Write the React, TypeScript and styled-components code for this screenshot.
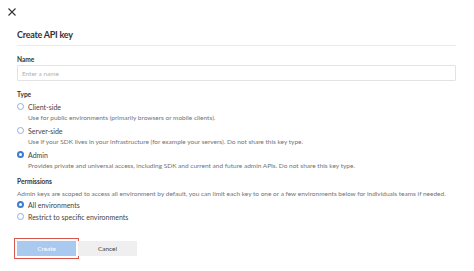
import React, { useState } from "react";
import styled, { createGlobalStyle } from "styled-components";

const GlobalStyle = createGlobalStyle`
  html, body {
    margin: 0;
    padding: 0;
    background: #ffffff;
  }
  body {
    font-family: Lato, "Open Sans", "Liberation Sans", sans-serif;
    color: #333;
  }
`;

type Option = { id: string; label: string; description?: string };

const typeOptions: Option[] = [
  {
    id: "client",
    label: "Client-side",
    description: "Use for public environments (primarily browsers or mobile clients).",
  },
  {
    id: "server",
    label: "Server-side",
    description:
      "Use if your SDK lives in your infrastructure (for example your servers). Do not share this key type.",
  },
  {
    id: "admin",
    label: "Admin",
    description:
      "Provides private and universal access, including SDK and current and future admin APIs. Do not share this key type.",
  },
];

const permissionOptions: Option[] = [
  { id: "all", label: "All environments" },
  { id: "restrict", label: "Restrict to specific environments" },
];

const App: React.FC = () => {
  const [keyType, setKeyType] = useState("admin");
  const [scope, setScope] = useState("all");
  const [name, setName] = useState("");

  return (
    <>
      <GlobalStyle />
      <Page>
        <CloseIcon aria-label="Close">
          <svg width="10" height="10" viewBox="0 0 10 10">
            <path d="M1.5 1.5 L8.5 8.5 M8.5 1.5 L1.5 8.5" stroke="#333" strokeWidth="1.1" fill="none" />
          </svg>
        </CloseIcon>
        <Content>
          <Title>Create API key</Title>
          <Divider />
          <Field>
            <Label>Name</Label>
            <NameInput
              placeholder="Enter a name"
              value={name}
              onChange={(e) => setName(e.target.value)}
            />
          </Field>
          <Field>
            <Label>Type</Label>
            <OptionList>
              {typeOptions.map((o) => (
                <RadioOption
                  key={o.id}
                  option={o}
                  checked={keyType === o.id}
                  onSelect={() => setKeyType(o.id)}
                />
              ))}
            </OptionList>
          </Field>
          <Field $gap={7}>
            <Label>Permissions</Label>
            <Help>
              Admin keys are scoped to access all environment by default, you can limit each key to
              one or a few environments below for individuals teams if needed.
            </Help>
            <OptionList $tight>
              {permissionOptions.map((o) => (
                <RadioOption
                  key={o.id}
                  option={o}
                  checked={scope === o.id}
                  onSelect={() => setScope(o.id)}
                />
              ))}
            </OptionList>
          </Field>
          <Actions>
            <CreateButton disabled>Create</CreateButton>
            <CancelButton>Cancel</CancelButton>
          </Actions>
        </Content>
      </Page>
    </>
  );
};

const RadioOption: React.FC<{ option: Option; checked: boolean; onSelect: () => void }> = ({
  option,
  checked,
  onSelect,
}) => (
  <OptionItem>
    <OptionRow onClick={onSelect}>
      <RadioDot $checked={checked} />
      <OptionLabel>{option.label}</OptionLabel>
    </OptionRow>
    {option.description && <OptionDesc>{option.description}</OptionDesc>}
  </OptionItem>
);

export default App;

const Page = styled.div`
  width: 474px;
  height: 271px;
  box-sizing: border-box;
  padding: 7px 0 0 7px;
  overflow: hidden;
`;

const CloseIcon = styled.div`
  width: 10px;
  height: 10px;
  display: flex;
`;

const Content = styled.div`
  display: flex;
  flex-direction: column;
  padding: 0 18px 0 10px;
`;

const Title = styled.h1`
  margin: 12px 0 0;
  font-size: 9px;
  line-height: 12px;
  font-weight: 700;
  letter-spacing: -0.25px;
  color: #333;
`;

const Divider = styled.div`
  height: 1px;
  background: #ececec;
  margin-top: 4px;
`;

const Field = styled.div<{ $gap?: number }>`
  display: flex;
  flex-direction: column;
  margin-top: ${({ $gap }) => $gap ?? 9}px;
`;

const Label = styled.div`
  font-size: 6.6px;
  font-weight: 700;
  line-height: 9px;
  color: #333;
`;

const NameInput = styled.input`
  margin-top: 1px;
  height: 16px;
  box-sizing: border-box;
  border: 1px solid #e3e3e3;
  border-radius: 1px;
  padding: 0 4px;
  font-family: inherit;
  font-size: 6.4px;
  color: #333;
  outline: none;
  &::placeholder {
    color: #b0b0b0;
  }
`;

const Help = styled.div`
  font-size: 6.5px;
  line-height: 9px;
  color: #737373;
  margin-top: 3px;
`;

const OptionList = styled.div<{ $tight?: boolean }>`
  display: flex;
  flex-direction: column;
  gap: ${({ $tight }) => ($tight ? "3px" : "4px")};
  margin-top: ${({ $tight }) => ($tight ? "2px" : "3px")};
`;

const OptionItem = styled.div`
  display: flex;
  flex-direction: column;
`;

const OptionRow = styled.label`
  display: flex;
  align-items: center;
  gap: 4px;
  height: 9px;
  cursor: pointer;
`;

const RadioDot = styled.span<{ $checked: boolean }>`
  width: 7px;
  height: 7px;
  box-sizing: border-box;
  border-radius: 50%;
  border: ${({ $checked }) => ($checked ? "2px solid #3f7ccf" : "1px solid #8fb1dd")};
  background: #fff;
`;

const OptionLabel = styled.span`
  font-size: 7px;
  color: #444;
`;

const OptionDesc = styled.div`
  font-size: 6.5px;
  line-height: 9px;
  color: #737373;
  margin-top: 2px;
  padding-left: 11px;
`;

const Actions = styled.div`
  display: flex;
  gap: 2px;
  margin-top: 20px;
`;

const BaseButton = styled.button`
  width: 59px;
  height: 15px;
  border: none;
  border-radius: 0;
  font-family: inherit;
  font-size: 6.4px;
  padding: 0;
`;

const CreateButton = styled(BaseButton)`
  background: #a9c9ef;
  color: #fff;
  outline: 1.5px solid #d6574f;
  outline-offset: 2.5px;
`;

const CancelButton = styled(BaseButton)`
  background: #efefef;
  color: #444;
`;
